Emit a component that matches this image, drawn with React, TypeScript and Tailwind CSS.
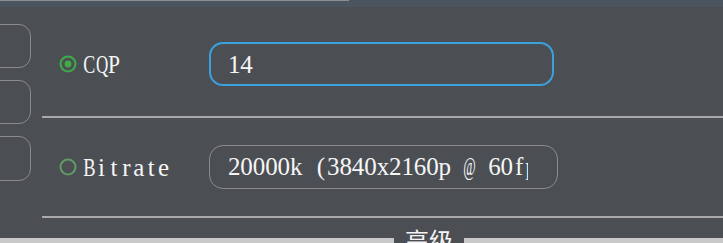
import React from "react";

const serif = { fontFamily: '"Liberation Serif", "DejaVu Serif", serif' };

const squeeze: Record<string, string> = {
  C: "scale-x-[0.72]",
  Q: "scale-x-[0.68]",
  P: "scale-x-[0.86]",
  B: "scale-x-[0.74]",
  "@": "scale-x-[0.54]",
};

function Mono({ text }: { text: string }) {
  return (
    <span className="inline-flex whitespace-nowrap text-[25px] leading-none text-[#f6f6f6]" style={serif}>
      {Array.from(text).map((c, i) => (
        <span key={i} className="inline-flex w-[12.4px] shrink-0 justify-center overflow-visible">
          <span className={"inline-block " + (squeeze[c] ?? "")}>{c === " " ? "\u00a0" : c}</span>
        </span>
      ))}
    </span>
  );
}

function Radio({ checked }: { checked: boolean }) {
  return (
    <svg width="18" height="18" viewBox="0 0 18 18" className="shrink-0">
      <circle cx="9" cy="9" r="7.5" fill="none" stroke={checked ? "#3fab47" : "#5f9a62"} strokeWidth="2" />
      {checked && <circle cx="9" cy="9" r="3.4" fill="#3fab47" />}
    </svg>
  );
}

export default function App() {
  return (
    <div className="w-[723px] h-[243px] bg-[#4b4f54] overflow-hidden flex flex-col">
      <div className="h-[7px] bg-[#4a5560] shrink-0">
        <div className="w-[349px] h-px bg-[#8e8e8e]" />
      </div>
      <div className="flex flex-row flex-1">
        <div className="w-[31px] shrink-0 flex flex-col gap-[12px] mt-[17px]">
          <div className="ml-[-30px] w-[61px] h-[44px] rounded-[12px] border-[1.5px] border-[#8a8a8a]" />
          <div className="ml-[-30px] w-[61px] h-[44px] rounded-[12px] border-[1.5px] border-[#8a8a8a]" />
          <div className="ml-[-30px] w-[61px] h-[45px] rounded-[12px] border-[1.5px] border-[#8a8a8a]" />
        </div>
        <div className="ml-[11px] flex-1 flex flex-col">
          <div className="mt-[35px] h-[44px] flex flex-row items-center">
            <div className="ml-[17px] flex items-center gap-[6px] w-[150px]">
              <Radio checked />
              <Mono text="CQP" />
            </div>
            <div className="w-[345px] h-[44px] rounded-[14px] border-2 border-[#3ba1dd] flex items-center pl-[17px]">
              <Mono text="14" />
            </div>
          </div>
          <div className="mt-[30px] h-[2px] bg-[#a8a8a8]" />
          <div className="mt-[27px] h-[44px] flex flex-row items-center">
            <div className="ml-[17px] flex items-center gap-[6px] w-[150px]">
              <Radio checked={false} />
              <Mono text="Bitrate" />
            </div>
            <div className="w-[349px] h-[44px] rounded-[14px] border-[1.5px] border-[#8c8c8c] flex items-center pl-[18px]">
              <div className="w-[300px] overflow-hidden">
                <Mono text="20000k (3840x2160p @ 60fps)" />
              </div>
            </div>
          </div>
          <div className="mt-[27px] h-[2px] bg-[#a8a8a8]" />
        </div>
      </div>
      <div className="h-[15px] shrink-0 flex flex-row items-start">
        <div className="w-[394px] mt-[10px] h-[10px] bg-[#c9c9c9]" />
        <div className="w-[70px] flex justify-center">
          <span className="text-[24px] leading-none text-[#f4f4f4]" style={{ fontFamily: '"Noto Sans CJK SC", sans-serif' }}>高级</span>
        </div>
        <div className="flex-1 mt-[10px] h-[10px] bg-[#c9c9c9]" />
      </div>
    </div>
  );
}
